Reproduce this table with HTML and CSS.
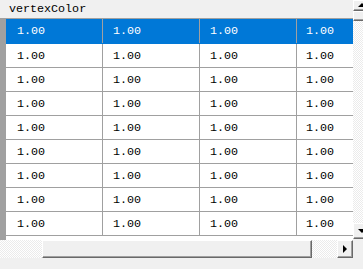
FILE: index.html
```html
<!DOCTYPE html>
<html>
<head>
<meta charset="utf-8">
<link rel="stylesheet" href="styles.css">
</head>
<body>
<div class="view">
  <div class="main">
    <div class="hdr">vertexColor</div>
    <div class="body">
      <div class="gutter"></div>
      <div class="rows">
        <div class="row sel"><div class="cell">1.00</div><div class="cell">1.00</div><div class="cell">1.00</div><div class="cell">1.00</div></div>
        <div class="row"><div class="cell">1.00</div><div class="cell">1.00</div><div class="cell">1.00</div><div class="cell">1.00</div></div>
        <div class="row"><div class="cell">1.00</div><div class="cell">1.00</div><div class="cell">1.00</div><div class="cell">1.00</div></div>
        <div class="row"><div class="cell">1.00</div><div class="cell">1.00</div><div class="cell">1.00</div><div class="cell">1.00</div></div>
        <div class="row"><div class="cell">1.00</div><div class="cell">1.00</div><div class="cell">1.00</div><div class="cell">1.00</div></div>
        <div class="row"><div class="cell">1.00</div><div class="cell">1.00</div><div class="cell">1.00</div><div class="cell">1.00</div></div>
        <div class="row"><div class="cell">1.00</div><div class="cell">1.00</div><div class="cell">1.00</div><div class="cell">1.00</div></div>
        <div class="row"><div class="cell">1.00</div><div class="cell">1.00</div><div class="cell">1.00</div><div class="cell">1.00</div></div>
        <div class="row"><div class="cell">1.00</div><div class="cell">1.00</div><div class="cell">1.00</div><div class="cell">1.00</div></div>
      </div>
    </div>
    <div class="hscroll">
      <div class="track tleft"></div>
      <div class="hthumb"></div>
      <div class="track tright"></div>
      <div class="btn hbtn"><span class="tri-right"></span></div>
    </div>
  </div>
  <div class="vscroll">
    <div class="btn vup"><span class="tri-up"></span></div>
    <div class="vthumb"></div>
    <div class="track vtrack"></div>
    <div class="btn vdown"><span class="tri-down"></span></div>
  </div>
</div>
</body>
</html>
```

FILE: styles.css
```css
html, body {
  margin: 0;
  padding: 0;
  background: #f0f0f0;
}
.view {
  display: flex;
  width: 363px;
  height: 269px;
  overflow: hidden;
  background: #f0f0f0;
  font-family: "Liberation Mono", "DejaVu Sans Mono", monospace;
  font-size: 11.7px;
}
.main {
  flex: none;
  width: 353px;
  display: flex;
  flex-direction: column;
}
.hdr {
  box-sizing: border-box;
  height: 19px;
  line-height: 17px;
  padding-top: 1px;
  padding-left: 9px;
  border-bottom: 1px solid #a0a0a0;
  color: #000;
  background: #f0f0f0;
}
.body {
  display: flex;
  height: 221px;
  overflow: hidden;
  background: #fff;
}
.gutter {
  flex: none;
  width: 6px;
  background: #a0a0a0;
}
.rows {
  flex: 1;
  min-width: 0;
}
.row {
  display: grid;
  grid-template-columns: 97px 97px 97px 1fr;
  height: 23px;
  line-height: 22px;
  border-bottom: 1px solid #a0a0a0;
  color: #000;
}
.row.sel {
  height: 24px;
  line-height: 23px;
  background: #0078d7;
  border-bottom-color: #0078d7;
  color: #fff;
}
.cell {
  border-right: 1px solid #a0a0a0;
  padding-top: 1px;
  padding-left: 10px;
  white-space: nowrap;
  overflow: hidden;
}
.cell:first-child {
  padding-left: 11px;
}
.cell:last-child {
  border-right: none;
  padding-left: 9px;
}
.track {
  background: repeating-conic-gradient(#ffffff 0 25%, #ebebeb 0 50%) 0 0 / 2px 2px;
}
.hscroll {
  display: flex;
  height: 18px;
}
.tleft {
  width: 42px;
  flex: none;
}
.tright {
  flex: 1;
}
.btn, .hthumb, .vthumb {
  box-sizing: border-box;
  background: #f0f0f0;
  border-top: 1px solid #ffffff;
  border-left: 1px solid #ffffff;
  border-right: 1px solid #696969;
  border-bottom: 1px solid #696969;
  box-shadow: inset -1px -1px 0 #a0a0a0;
}
.hthumb {
  flex: none;
  width: 270px;
}
.hbtn {
  flex: none;
  width: 16px;
  display: flex;
  align-items: center;
  justify-content: center;
  padding-bottom: 1px;
}
.tri-right {
  width: 0;
  height: 0;
  border-top: 4px solid transparent;
  border-bottom: 4px solid transparent;
  border-left: 4px solid #000;
}
.vscroll {
  flex: none;
  width: 17px;
  display: flex;
  flex-direction: column;
}
.vup {
  height: 11px;
  display: flex;
  justify-content: center;
  padding-top: 2px;
}
.tri-up {
  width: 0;
  height: 0;
  border-left: 4px solid transparent;
  border-right: 4px solid transparent;
  border-bottom: 4px solid #000;
}
.vthumb {
  height: 10px;
}
.vtrack {
  height: 202px;
}
.vdown {
  height: 16px;
  display: flex;
  align-items: center;
  justify-content: center;
}
.tri-down {
  width: 0;
  height: 0;
  border-left: 4px solid transparent;
  border-right: 4px solid transparent;
  border-top: 4px solid #000;
}
```
